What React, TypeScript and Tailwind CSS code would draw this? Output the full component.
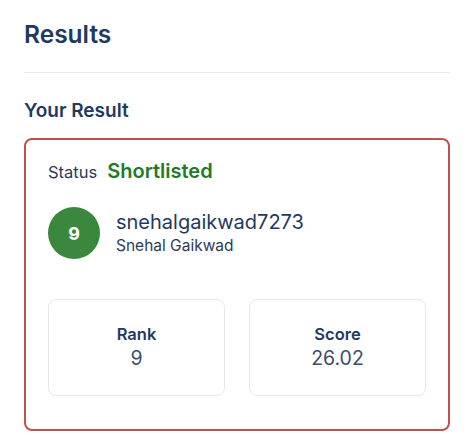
export default function App() {
  return (
    <div className="min-h-screen bg-white px-6 pt-[19px] font-['Inter',sans-serif] text-[#1f3a60]">
      <h1 className="text-[24.5px] font-semibold leading-[30px]">Results</h1>
      <div className="mt-[23px] h-px w-full bg-gray-200" />

      <h2 className="mt-[25px] text-[19px] font-semibold leading-[26px]">Your Result</h2>

      <div className="mt-[14px] rounded-lg border-2 border-[#c0524e] px-[22px] pb-[33px] pt-[17px]">
        <div className="flex items-baseline gap-[10px] leading-[28px]">
          <span className="text-[16.5px] text-[#2b3b58]">Status</span>
          <span className="text-[20px] font-semibold text-[#237a26]">Shortlisted</span>
        </div>

        <div className="mt-[21px] flex items-center gap-[16px]">
          <div className="flex h-[52px] w-[52px] items-center justify-center rounded-full bg-[#3a873d] text-[18px] font-bold text-white">
            9
          </div>
          <div className="flex flex-col">
            <span className="text-[20px] leading-[25px] text-[#1f3a60]">snehalgaikwad7273</span>
            <span className="text-[15.5px] leading-[21px] text-[#2b3b58]">Snehal Gaikwad</span>
          </div>
        </div>

        <div className="mt-[40px] grid grid-cols-2 gap-6">
          <div className="flex h-[97px] flex-col items-center justify-center rounded-lg border border-gray-200 pb-[2px]">
            <span className="text-[16.5px] font-semibold leading-[23px] text-[#1f3a60]">Rank</span>
            <span className="text-[19.5px] leading-[24px] text-[#3b4d6b]">9</span>
          </div>
          <div className="flex h-[97px] flex-col items-center justify-center rounded-lg border border-gray-200 pb-[2px]">
            <span className="text-[16.5px] font-semibold leading-[23px] text-[#1f3a60]">Score</span>
            <span className="text-[19.5px] leading-[24px] text-[#3b4d6b]">26.02</span>
          </div>
        </div>
      </div>
    </div>
  );
}
